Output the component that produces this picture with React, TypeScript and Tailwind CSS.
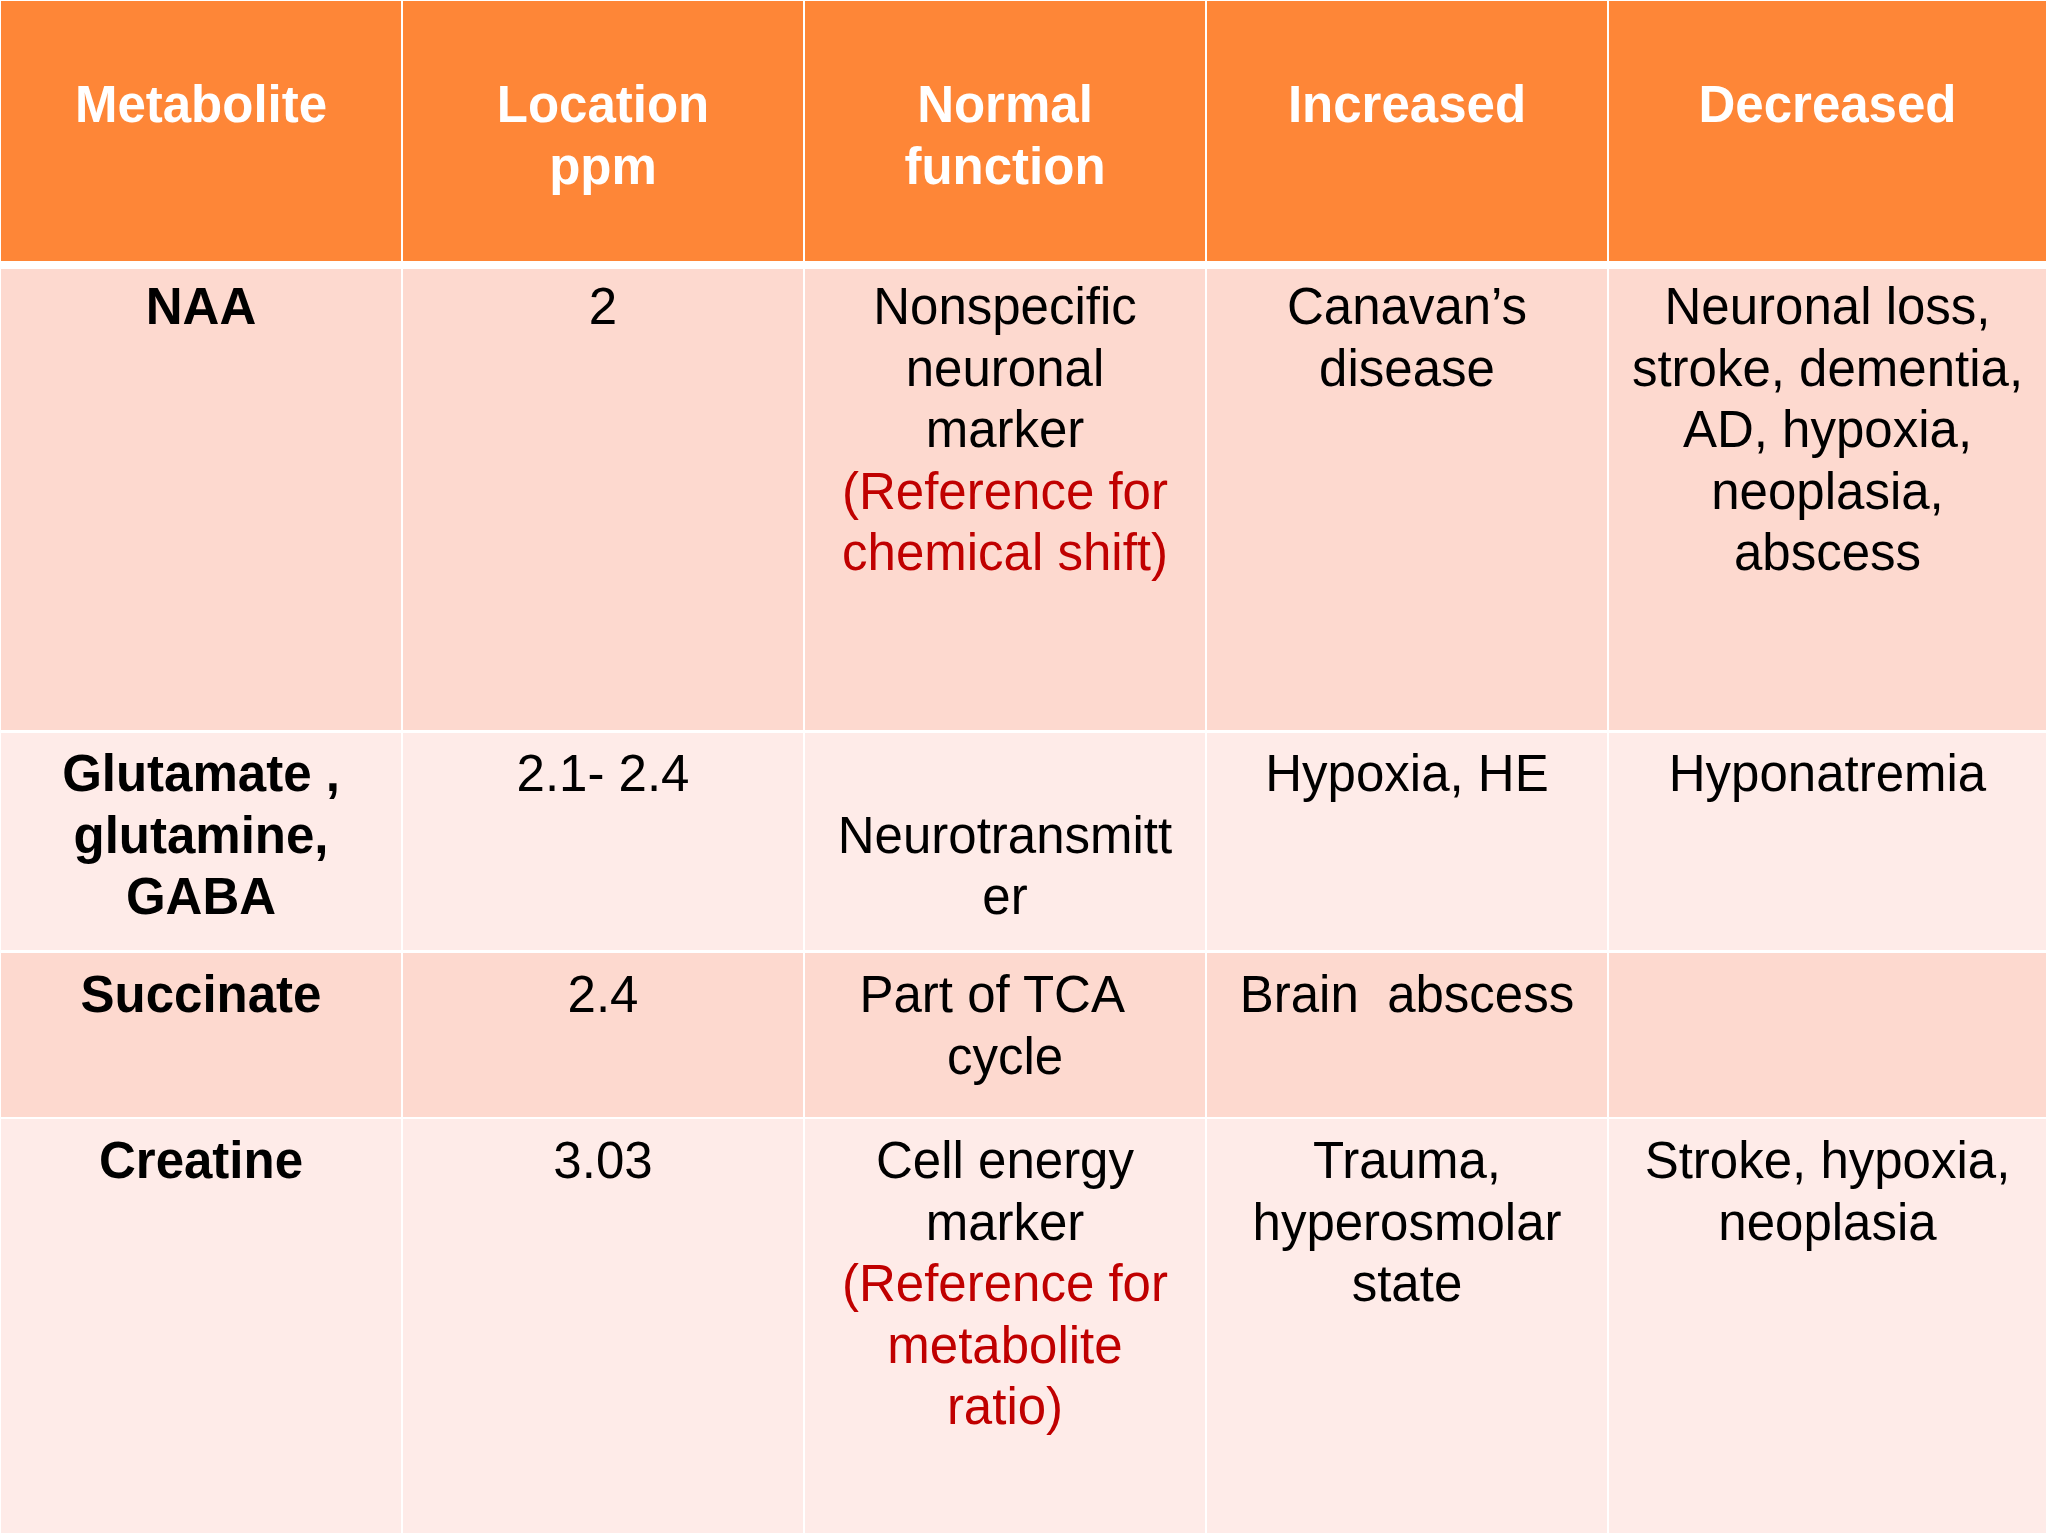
import React from "react";

type Line = { t: string; red?: boolean };
type Cell = Line[];

const L = (...items: (string | Line)[]): Cell =>
  items.map((i) => (typeof i === "string" ? { t: i } : i));

const header: Cell[] = [
  L("Metabolite"),
  L("Location", "ppm"),
  L("Normal", "function"),
  L("Increased"),
  L("Decreased"),
];

type Row = { cells: Cell[]; h: string; pt: string; bg: string; mt: string };

const rows: Row[] = [
  {
    cells: [
      L("NAA"),
      L("2"),
      L(
        "Nonspecific",
        "neuronal",
        "marker",
        { t: "(Reference for", red: true },
        { t: "chemical shift)", red: true }
      ),
      L("Canavan\u2019s", "disease"),
      L("Neuronal loss,", "stroke, dementia,", "AD, hypoxia,", "neoplasia,", "abscess"),
    ],
    h: "h-[461px]",
    pt: "pt-[7px]",
    bg: "bg-[#fdd9cf]",
    mt: "mt-[8px]",
  },
  {
    cells: [
      L("Glutamate ,", "glutamine,", "GABA"),
      L("2.1- 2.4"),
      L(" ", "Neurotransmitt", "er"),
      L("Hypoxia, HE"),
      L("Hyponatremia"),
    ],
    h: "h-[217px]",
    pt: "pt-[10px]",
    bg: "bg-[#feebe8]",
    mt: "mt-[3px]",
  },
  {
    cells: [
      L("Succinate"),
      L("2.4"),
      L("Part of TCA  ", "cycle"),
      L("Brain  abscess"),
      L(),
    ],
    h: "h-[164px]",
    pt: "pt-[11px]",
    bg: "bg-[#fdd9cf]",
    mt: "mt-[3px]",
  },
  {
    cells: [
      L("Creatine"),
      L("3.03"),
      L(
        "Cell energy",
        "marker",
        { t: "(Reference for", red: true },
        { t: "metabolite", red: true },
        { t: "ratio)", red: true }
      ),
      L("Trauma,", "hyperosmolar", "state"),
      L("Stroke, hypoxia,", "neoplasia"),
    ],
    h: "h-[414px]",
    pt: "pt-[11px]",
    bg: "bg-[#feebe8]",
    mt: "mt-[2px]",
  },
];

const gridCols =
  "grid grid-cols-[400px_400px_400px_400px_437px] gap-x-[2px]";

function CellText({ cell, bold, white }: { cell: Cell; bold?: boolean; white?: boolean }) {
  return (
    <>
      {cell.map((ln, i) => (
        <div
          key={i}
          className={
            "whitespace-pre " +
            (white
              ? "text-white"
              : ln.red
              ? "text-[#c00000]"
              : "text-black") +
            (bold ? " font-bold" : "")
          }
        >
          {ln.t}
        </div>
      ))}
    </>
  );
}

export default function App() {
  return (
    <div
      className="w-[2048px] h-[1536px] bg-white overflow-hidden pl-[1px] pt-[1px] text-[51px] leading-[61.5px] text-center"
      style={{ fontFamily: '"Liberation Sans", Arial, sans-serif' }}
    >
      <div className={gridCols + " h-[260px]"}>
        {header.map((c, i) => (
          <div key={i} className="bg-[#fe8637] pt-[73px] px-[20px]">
            <CellText cell={c} bold white />
          </div>
        ))}
      </div>
      {rows.map((r, ri) => (
        <div key={ri} className={gridCols + " " + r.h + " " + r.mt}>
          {r.cells.map((c, ci) => (
            <div key={ci} className={r.bg + " " + r.pt + " px-[10px]"}>
              <CellText cell={c} bold={ci === 0} />
            </div>
          ))}
        </div>
      ))}
    </div>
  );
}
